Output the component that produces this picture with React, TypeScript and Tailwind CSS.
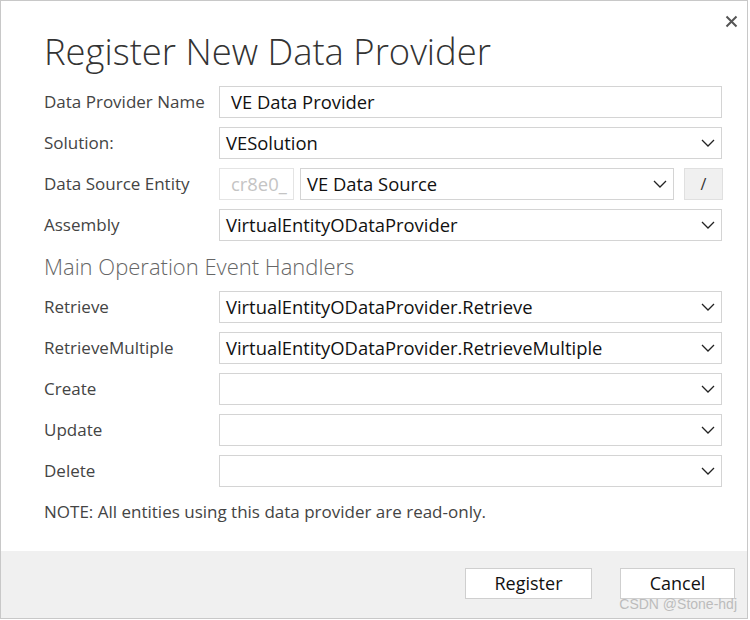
import React from "react";

const FONT = { fontFamily: '"Segoe UI", "Open Sans", "Noto Sans", sans-serif' };

function Chevron() {
  return (
    <svg width="14" height="8" viewBox="0 0 14 8" className="shrink-0">
      <path d="M1 1 L7 7 L13 1" fill="none" stroke="#222" strokeWidth="1.3" />
    </svg>
  );
}

function Select({ value, className = "" }: { value?: string; className?: string }) {
  return (
    <div
      className={`h-[32px] border border-[#d4d4d4] bg-white flex items-center justify-between pl-[6px] pr-[6px] ${className}`}
    >
      <span className="text-[18.4px] text-[#111] leading-none whitespace-nowrap">{value}</span>
      <Chevron />
    </div>
  );
}

function Row({ label, children }: { label: string; children: React.ReactNode }) {
  return (
    <div className="flex items-center h-[32px]">
      <div className="w-[175px] shrink-0 text-[17px] text-[#444]">{label}</div>
      <div className="w-[503px] flex gap-[6px]">{children}</div>
    </div>
  );
}

export default function App() {
  return (
    <div style={FONT} className="w-[748px] h-[620px] bg-white">
      <div className="relative w-[748px] h-[619px] border border-[#c8c8c8] flex flex-col">
        {/* close */}
        <svg className="absolute left-[724px] top-[14px]" width="13" height="13" viewBox="0 0 13 13">
          <path d="M1.5 1.5 L11.5 11.5 M11.5 1.5 L1.5 11.5" stroke="#555" strokeWidth="2" />
        </svg>

        <div className="flex-1 pl-[43px] pt-[24px]">
          <h1 className="text-[36.4px] font-light text-[#333] leading-[52px] h-[52px] mb-[9px]">
            Register New Data Provider
          </h1>

          <div className="flex flex-col gap-[9px]">
            <Row label="Data Provider Name">
              <div className="w-full h-[32px] border border-[#d4d4d4] flex items-center pl-[11px]">
                <span className="text-[18.4px] text-[#111] leading-none">VE Data Provider</span>
              </div>
            </Row>
            <Row label="Solution:">
              <Select value="VESolution" className="w-full" />
            </Row>
            <Row label="Data Source Entity">
              <div className="w-[75px] h-[32px] border border-[#e4e4e4] flex items-center pl-[11px] shrink-0">
                <span className="text-[18.4px] text-[#c4c4c4] leading-none">cr8e0_</span>
              </div>
              <Select value="VE Data Source" className="w-[374px] shrink-0" />
              <div className="ml-[4px] w-[39px] h-[32px] border border-[#e0e0e0] bg-[#f0f0f0] flex items-center justify-center text-[16px] text-[#333] shrink-0">
                /
              </div>
            </Row>
            <Row label="Assembly">
              <Select value="VirtualEntityODataProvider" className="w-full" />
            </Row>

            <div className="h-[32px] flex items-center text-[22px] text-[#666] font-light">
              Main Operation Event Handlers
            </div>

            <Row label="Retrieve">
              <Select value="VirtualEntityODataProvider.Retrieve" className="w-full" />
            </Row>
            <Row label="RetrieveMultiple">
              <Select value="VirtualEntityODataProvider.RetrieveMultiple" className="w-full" />
            </Row>
            <Row label="Create">
              <Select className="w-full" />
            </Row>
            <Row label="Update">
              <Select className="w-full" />
            </Row>
            <Row label="Delete">
              <Select className="w-full" />
            </Row>

            <div className="h-[32px] flex items-center text-[17px] text-[#444]">
              NOTE: All entities using this data provider are read-only.
            </div>
          </div>
        </div>

        <div className="h-[67px] bg-[#f0f0f0] flex items-center justify-end pr-[12px] gap-[28px] pb-[2px]">
          <button className="w-[127px] h-[31px] bg-white border border-[#cfcfcf] text-[18px] text-[#111]">
            Register
          </button>
          <button className="w-[115px] h-[31px] bg-white border border-[#cfcfcf] text-[18px] text-[#111]">
            Cancel
          </button>
        </div>

        <div
          className="absolute right-[10px] bottom-[7px] text-[14px] text-[#bcbcbc] leading-none"
          style={{ fontFamily: '"Liberation Sans", sans-serif' }}
        >
          CSDN @Stone-hdj
        </div>
      </div>
    </div>
  );
}
